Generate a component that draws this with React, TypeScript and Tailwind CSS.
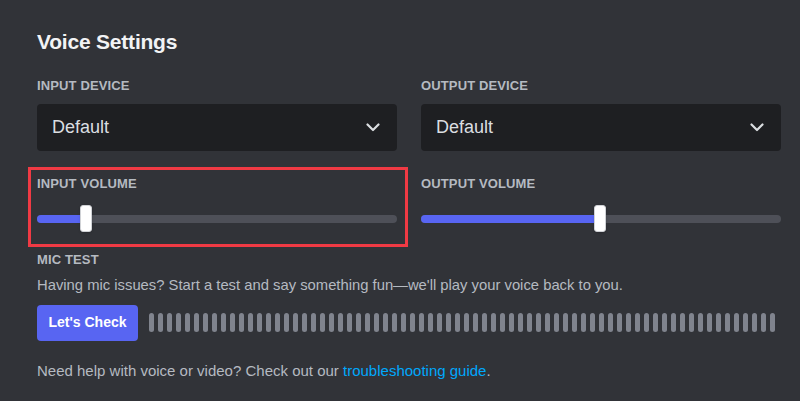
const bars = Array.from({ length: 70 }, (_, i) => i);

const Chevron = () => (
  <svg width="14" height="9" viewBox="0 0 14 9" fill="none">
    <path d="M1.5 1.5L7 7l5.5-5.5" stroke="#dbdee1" strokeWidth="2.2" strokeLinecap="round" strokeLinejoin="round" />
  </svg>
);

const Label = ({ children }: { children: React.ReactNode }) => (
  <div className="text-[13px] leading-4 font-bold tracking-[0.01em] text-[#b5bac1] uppercase">{children}</div>
);

const Select = ({ value }: { value: string }) => (
  <div className="mt-[10px] h-[47px] rounded-[4px] bg-[#1e1f22] flex items-center justify-between pl-[15px] pr-[17px]">
    <span className="text-[18px] text-[#dbdee1]">{value}</span>
    <Chevron />
  </div>
);

const Slider = ({ pct }: { pct: number }) => (
  <div className="relative mt-[13.5px] h-[27px] flex items-center">
    <div className="w-full h-[8px] rounded-full bg-[#4e5058] overflow-hidden">
      <div className="h-full bg-[#5865f2]" style={{ width: `${pct}%` }} />
    </div>
    {/* grabber */}
    <div
      className="absolute top-0 h-[27px] w-[12px] -ml-[6px] rounded-[3px] bg-white border border-[#d0d2d6] shadow"
      style={{ left: `${pct}%` }}
    />
  </div>
);

export default function App() {
  return (
    <div className="w-[800px] h-[401px] bg-[#313338] pl-[37px] pr-[19px] pt-[28px] font-['Liberation_Sans',Arial,sans-serif] overflow-hidden">
      <h1 className="text-[21px] leading-[28px] font-bold tracking-[-0.01em] text-[#f2f3f5]">Voice Settings</h1>

      <div className="grid grid-cols-2 gap-x-[24px] mt-[22px]">
        <div>
          <Label>Input Device</Label>
          <Select value="Default" />
        </div>
        <div>
          <Label>Output Device</Label>
          <Select value="Default" />
        </div>
      </div>

      <div className="grid grid-cols-2 gap-x-[24px] mt-[24.5px]">
        <div className="relative">
          <Label>Input Volume</Label>
          <Slider pct={13.6} />
          {/* highlight annotation */}
          <div className="absolute -left-[9px] -right-[11px] -top-[8.5px] -bottom-[15px] border-[3px] border-[#f03a44] pointer-events-none" />
        </div>
        <div>
          <Label>Output Volume</Label>
          <Slider pct={49.7} />
        </div>
      </div>

      <div className="mt-[19.5px]">
        <Label>Mic Test</Label>
        <p className="mt-[7px] text-[14.8px] leading-5 text-[#b5bac1]">
          Having mic issues? Start a test and say something fun—we'll play your voice back to you.
        </p>
        <div className="mt-[10px] flex items-center">
          <button className="h-[36px] w-[101px] rounded-[4px] bg-[#5865f2] text-white text-[14px] font-bold">
            Let's Check
          </button>
          <div className="ml-[11px] w-[626px] flex justify-between">
            {bars.map((i) => (
              <div key={i} className="w-[4.5px] h-[19px] rounded-full bg-[#80848e]" />
            ))}
          </div>
        </div>
        <p className="mt-[20px] text-[15px] leading-5 text-[#b5bac1]">
          Need help with voice or video? Check out our{" "}
          <span className="text-[#00a8fc]">troubleshooting guide</span>.
        </p>
      </div>
    </div>
  );
}
